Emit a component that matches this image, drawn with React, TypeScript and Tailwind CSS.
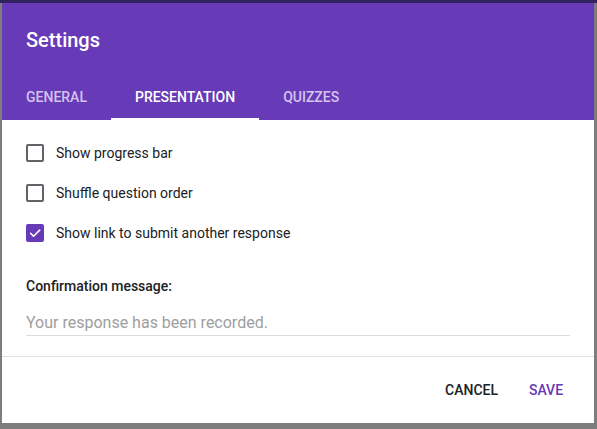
import React from 'react';

const font = { fontFamily: 'Roboto, "Noto Sans", Arial, sans-serif' };

const Checkbox: React.FC<{ checked?: boolean; label: string }> = ({ checked, label }) => (
  <div className="flex h-10 items-center">
    {checked ? (
      <div className="flex h-[18px] w-[18px] items-center justify-center rounded-[2px] bg-[#673ab7]">
        <svg width="14" height="14" viewBox="0 0 24 24" fill="none">
          <path d="M4.5 12.5l5 5L20 7" stroke="white" strokeWidth="2.8" strokeLinecap="round" strokeLinejoin="round" />
        </svg>
      </div>
    ) : (
      <div className="h-[18px] w-[18px] rounded-[2px] border-2 border-[#5f6368]" />
    )}
    <span className="ml-[12px] text-[14px] text-[#202124]">{label}</span>
  </div>
);

export default function App() {
  const tabs = ['GENERAL', 'PRESENTATION', 'QUIZZES'];
  return (
    <div className="h-[429px] w-[597px] overflow-hidden border-t-[3px] border-[#30225c] bg-[#7d7d7d]" style={font}>
      <div className="ml-[2px] flex h-[420px] w-[592px] flex-col bg-white">
        {/* header */}
        <div className="h-[117px] bg-[#673ab7]">
          <div className="px-6 pt-[23px] text-[20px] font-medium leading-7 text-white">Settings</div>
          <div className="mt-[19px] flex h-12">
            {tabs.map((t) => (
              <div
                key={t}
                className={
                  'flex items-center border-b-[3px] px-6 pt-[3px] text-[14px] font-medium ' +
                  (t === 'PRESENTATION' ? 'border-white text-white' : 'border-transparent text-[#d4c4ee]')
                }
              >
                {t}
              </div>
            ))}
          </div>
        </div>

        {/* body */}
        <div className="px-6 pt-[13px]">
          <Checkbox label="Show progress bar" />
          <Checkbox label="Shuffle question order" />
          <Checkbox checked label="Show link to submit another response" />
          <div className="mt-[23px] text-[14px] font-medium leading-5 text-[#202124]">Confirmation message:</div>
          <div className="mt-[15px] h-[25px] border-b border-[#dadce0] text-[16px] leading-6 text-[#9e9e9e]">
            Your response has been recorded.
          </div>
        </div>
        <div className="mt-5 border-t border-[#e0e0e0]" />

        {/* footer */}
        <div className="flex flex-1 items-center justify-end gap-2 pr-4">
          <button className="min-w-16 px-2 text-[14px] font-medium text-[#202124]">CANCEL</button>
          <button className="min-w-16 px-2 text-[14px] font-medium text-[#673ab7]">SAVE</button>
        </div>
      </div>
    </div>
  );
}
